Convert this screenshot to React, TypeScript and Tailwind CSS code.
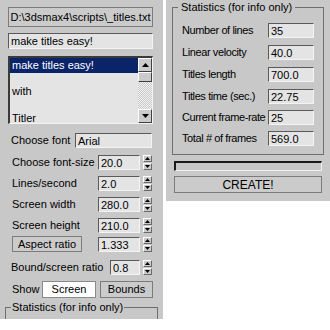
import React from "react";

const font = { fontFamily: '"Liberation Sans", Arial, sans-serif' };

function Field({ value, w }: { value: string; w: string }) {
  return (
    <div
      className={`${w} h-[15px] bg-[#e4e4e4] border-t border-l border-t-[#5a5a5a] border-l-[#5a5a5a] border-b border-r border-b-[#f4f4f4] border-r-[#f4f4f4] pl-[2px] text-[11px] leading-[14px] text-black whitespace-nowrap`}
    >
      {value}
    </div>
  );
}

function Arrow({ up }: { up: boolean }) {
  return (
    <div className="w-[9px] h-[7px] bg-[#cbcbcb] border border-t-white border-l-white border-b-[#6a6a6a] border-r-[#6a6a6a] flex items-center justify-center">
      <svg width="5" height="3" viewBox="0 0 5 3">
        {up ? <path d="M2.5 0L5 3H0z" fill="#000" /> : <path d="M0 0h5L2.5 3z" fill="#000" />}
      </svg>
    </div>
  );
}

function Spinner({ value, w = "w-[42px]" }: { value: string; w?: string }) {
  return (
    <div className="flex items-center gap-[3px]">
      <Field value={value} w={w} />
      <div className="flex flex-col gap-[1px]">
        <Arrow up />
        <Arrow up={false} />
      </div>
    </div>
  );
}

function Row({ label, value, mt }: { label: string; value: string; mt: string }) {
  return (
    <div className={`flex items-center h-[15px] ${mt}`}>
      <div className="w-[90px] pl-[4px] text-[11px] leading-none whitespace-nowrap">{label}</div>
      <Spinner value={value} />
    </div>
  );
}

function StatRow({ label, value, mt }: { label: string; value: string; mt: string }) {
  return (
    <div className={`flex items-center h-[15px] ${mt}`}>
      <div className="w-[88px] text-[11px] leading-none tracking-[-0.4px] whitespace-nowrap">{label}</div>
      <Field value={value} w="w-[47px]" />
    </div>
  );
}

function ScrollBtn({ up }: { up: boolean }) {
  return (
    <div className="w-[14px] h-[14px] bg-[#cbcbcb] border border-t-white border-l-white border-b-[#404040] border-r-[#404040] flex items-center justify-center">
      <svg width="7" height="4" viewBox="0 0 7 4">
        {up ? <path d="M3.5 0L7 4H0z" fill="#000" /> : <path d="M0 0h7L3.5 4z" fill="#000" />}
      </svg>
    </div>
  );
}

export default function App() {
  return (
    <div className="w-[330px] h-[330px] bg-white flex text-black" style={font}>
      {/* Left rollout */}
      <div className="w-[163px] h-[319px] bg-[#c8c8c8] flex flex-col px-[8px] pt-[7px]">
        <div className="h-[20px] w-[145px] bg-[#cbcbcb] border border-[#7c7c7c] flex items-center justify-center text-[11px] whitespace-nowrap">
          D:\3dsmax4\scripts\_titles.txt
        </div>
        <div className="mt-[6px] h-[16px] w-[145px] bg-[#e4e4e4] border-t border-l border-t-[#5a5a5a] border-l-[#5a5a5a] border-b border-r border-b-[#f4f4f4] border-r-[#f4f4f4] pl-[2px] text-[11px] leading-[14px]">
          make titles easy!
        </div>
        {/* list */}
        <div className="mt-[7px] h-[68px] w-[145px] bg-[#e4e4e4] border-t-2 border-l-2 border-t-[#3a3a3a] border-l-[#3a3a3a] border-b border-r border-b-[#f4f4f4] border-r-[#f4f4f4] flex">
          <div className="flex-1 flex flex-col text-[11px] leading-[13px] overflow-hidden">
            <div className="bg-[#0a246a] text-white pl-[2px] h-[15px] leading-[15px] shrink-0">make titles easy!</div>
            <div className="h-[12px] shrink-0" />
            <div className="pl-[2px] h-[13px] shrink-0">with</div>
            <div className="h-[14px] shrink-0" />
            <div className="pl-[2px] h-[13px] shrink-0">Titler</div>
          </div>
          <div className="w-[14px] flex flex-col bg-[repeating-conic-gradient(#c8c8c8_0%_25%,#f2f2f2_0%_50%)] bg-[length:2px_2px]">
            <ScrollBtn up />
            <div className="h-[10px] bg-[#cbcbcb] border border-t-white border-l-white border-b-[#404040] border-r-[#404040]" />
            <div className="flex-1" />
            <ScrollBtn up={false} />
          </div>
        </div>
        {/* font */}
        <div className="flex items-center h-[15px] mt-[9px]">
          <div className="w-[67px] pl-[3px] text-[11px] leading-none whitespace-nowrap">Choose font</div>
          <Field value="Arial" w="w-[77px]" />
        </div>
        <Row label="Choose font-size" value="20.0" mt="mt-[7px]" />
        <Row label="Lines/second" value="2.0" mt="mt-[6px]" />
        <Row label="Screen width" value="280.0" mt="mt-[6px]" />
        <Row label="Screen height" value="210.0" mt="mt-[6px]" />
        <div className="flex items-center h-[16px] mt-[3px]">
          <div className="w-[90px] pl-[4px]">
            <div className="w-[70px] h-[16px] bg-[#cbcbcb] border border-[#7c7c7c] text-[11px] flex items-center justify-center whitespace-nowrap">
              Aspect ratio
            </div>
          </div>
          <Spinner value="1.333" />
        </div>
        <div className="flex items-center h-[15px] mt-[8px]">
          <div className="w-[102px] pl-[3px] text-[11px] leading-none whitespace-nowrap">Bound/screen ratio</div>
          <Spinner value="0.8" w="w-[30px]" />
        </div>
        <div className="flex items-center h-[17px] mt-[6px]">
          <div className="w-[34px] pl-[4px] text-[11px] leading-none">Show</div>
          <div className="w-[54px] h-[17px] bg-white border border-[#8a8a8a] text-[11px] flex items-center justify-center">
            Screen
          </div>
          <div className="ml-[4px] w-[53px] h-[17px] bg-[#cbcbcb] border border-[#7c7c7c] text-[11px] flex items-center justify-center">
            Bounds
          </div>
        </div>
        <div className="mt-[9px] -mx-[3px] flex-1 border-t border-l border-r border-[#6e6e6e] relative">
          <div className="absolute -top-[8px] left-[5px] bg-[#c8c8c8] px-[1px] text-[11px] leading-[14px] whitespace-nowrap">
            Statistics (for info only)
          </div>
        </div>
      </div>

      {/* Right rollout */}
      <div className="ml-[3px] w-[164px] h-[201px] bg-[#c8c8c8] flex flex-col px-[6px] pt-[7px]">
        <div className="h-[148px] border border-[#6e6e6e] relative flex flex-col px-[9px] pt-[15px]">
          <div className="absolute -top-[8px] left-[5px] bg-[#c8c8c8] px-[3px] text-[11px] leading-[14px] whitespace-nowrap">
            Statistics (for info only)
          </div>
          <StatRow label="Number of lines" value="35" mt="mt-0" />
          <StatRow label="Linear velocity" value="40.0" mt="mt-[7px]" />
          <StatRow label="Titles length" value="700.0" mt="mt-[7px]" />
          <StatRow label="Titles time (sec.)" value="22.75" mt="mt-[7px]" />
          <StatRow label="Current frame-rate" value="25" mt="mt-[6px]" />
          <StatRow label="Total # of frames" value="569.0" mt="mt-[6px]" />
        </div>
        <div className="mt-[6px] mx-[2px] h-[10px] bg-[#c8c8c8] border-t-2 border-l-2 border-t-[#1a1a1a] border-l-[#1a1a1a] border-b border-r border-b-[#f0f0f0] border-r-[#f0f0f0]" />
        <div className="mt-[5px] mx-[2px] h-[17px] bg-[#cbcbcb] border border-[#7c7c7c] text-[12px] flex items-center justify-center">
          CREATE!
        </div>
      </div>
    </div>
  );
}
